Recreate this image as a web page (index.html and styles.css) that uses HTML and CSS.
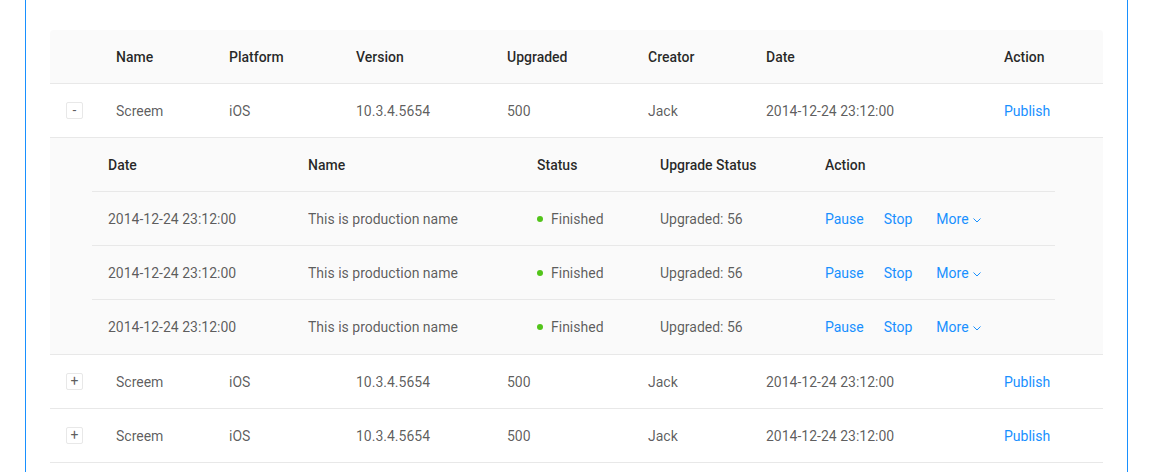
FILE: index.html
```html
<!DOCTYPE html>
<html>
<head>
<meta charset="utf-8">
<link rel="stylesheet" href="styles.css">
</head>
<body>
<div class="frame">
  <table class="main">
    <colgroup>
      <col class="c-exp"><col class="c-name"><col class="c-plat"><col class="c-ver"><col class="c-upg"><col class="c-creator"><col class="c-date"><col class="c-action">
    </colgroup>
    <thead>
      <tr><th></th><th>Name</th><th>Platform</th><th>Version</th><th>Upgraded</th><th>Creator</th><th>Date</th><th>Action</th></tr>
    </thead>
    <tbody>
      <tr>
        <td><span class="exp">-</span></td><td>Screem</td><td>iOS</td><td>10.3.4.5654</td><td>500</td><td>Jack</td><td>2014-12-24 23:12:00</td><td><a class="link">Publish</a></td>
      </tr>
      <tr class="expanded">
        <td colspan="8" class="exp-cell">
          <div class="nested-wrap">
            <table class="nested">
              <colgroup>
                <col class="n-date"><col class="n-name"><col class="n-status"><col class="n-upg"><col class="n-action">
              </colgroup>
              <thead>
                <tr><th>Date</th><th>Name</th><th>Status</th><th>Upgrade Status</th><th>Action</th></tr>
              </thead>
              <tbody>
                <tr><td>2014-12-24 23:12:00</td><td>This is production name</td><td><span class="dot"></span>Finished</td><td>Upgraded: 56</td><td><div class="acts"><a class="link pause">Pause</a><a class="link stop">Stop</a><a class="link more">More <svg class="chev" width="8" height="5" viewBox="0 0 8 5"><polyline points="0.5,0.5 4,4 7.5,0.5" fill="none" stroke="#1890ff" stroke-width="1"/></svg></a></div></td></tr>
                <tr><td>2014-12-24 23:12:00</td><td>This is production name</td><td><span class="dot"></span>Finished</td><td>Upgraded: 56</td><td><div class="acts"><a class="link pause">Pause</a><a class="link stop">Stop</a><a class="link more">More <svg class="chev" width="8" height="5" viewBox="0 0 8 5"><polyline points="0.5,0.5 4,4 7.5,0.5" fill="none" stroke="#1890ff" stroke-width="1"/></svg></a></div></td></tr>
                <tr class="last"><td>2014-12-24 23:12:00</td><td>This is production name</td><td><span class="dot"></span>Finished</td><td>Upgraded: 56</td><td><div class="acts"><a class="link pause">Pause</a><a class="link stop">Stop</a><a class="link more">More <svg class="chev" width="8" height="5" viewBox="0 0 8 5"><polyline points="0.5,0.5 4,4 7.5,0.5" fill="none" stroke="#1890ff" stroke-width="1"/></svg></a></div></td></tr>
              </tbody>
            </table>
          </div>
        </td>
      </tr>
      <tr>
        <td><span class="exp">+</span></td><td>Screem</td><td>iOS</td><td>10.3.4.5654</td><td>500</td><td>Jack</td><td>2014-12-24 23:12:00</td><td><a class="link">Publish</a></td>
      </tr>
      <tr>
        <td><span class="exp">+</span></td><td>Screem</td><td>iOS</td><td>10.3.4.5654</td><td>500</td><td>Jack</td><td>2014-12-24 23:12:00</td><td><a class="link">Publish</a></td>
      </tr>
    </tbody>
  </table>
</div>
</body>
</html>
```

FILE: styles.css
```css
html, body {
  margin: 0;
  padding: 0;
  background: #fff;
}
body {
  font-family: Roboto, "Noto Sans", sans-serif;
  font-size: 14px;
  line-height: 21px;
  color: rgba(0, 0, 0, 0.65);
  height: 472px;
  overflow: hidden;
}
.frame {
  margin-left: 25px;
  width: 1053px;
  padding: 30px 24px 0 24px;
  border-left: 1px solid #1890ff;
  border-right: 1px solid #1890ff;
  min-height: 600px;
}
table {
  border-collapse: separate;
  border-spacing: 0;
  table-layout: fixed;
}
.main {
  width: 1053px;
}
.c-exp { width: 50px; }
.c-name { width: 113px; }
.c-plat { width: 127px; }
.c-ver { width: 151px; }
.c-upg { width: 141px; }
.c-creator { width: 118px; }
.c-date { width: 238px; }
.c-action { width: 115px; }

th, td {
  text-align: left;
  padding: 17px 16px 15px;
  border-bottom: 1px solid #e8e8e8;
  white-space: nowrap;
  vertical-align: middle;
}
th {
  font-weight: 500;
  color: rgba(0, 0, 0, 0.85);
}
.main > thead > tr > th {
  background: #fafafa;
}
.main > thead > tr > th:first-child {
  border-top-left-radius: 4px;
}
.main > thead > tr > th:last-child {
  border-top-right-radius: 4px;
}
.exp {
  display: inline-block;
  box-sizing: border-box;
  width: 17px;
  height: 17px;
  border: 1px solid #e8e8e8;
  border-radius: 2px;
  background: #fff;
  text-align: center;
  line-height: 14px;
  font-size: 14px;
  color: rgba(0, 0, 0, 0.65);
  vertical-align: middle;
  margin-top: -4px;
}
.link {
  color: #1890ff;
  text-decoration: none;
}
.exp-cell {
  padding: 0;
  background: #fafafa;
}
.nested-wrap {
  padding: 0 48px 0 42px;
}
.nested {
  width: 963px;
}
.n-date { width: 200px; }
.n-name { width: 229px; }
.n-status { width: 123px; }
.n-upg { width: 165px; }
.n-action { width: 246px; }
.nested th, .nested td {
  background: transparent;
}
.nested tr.last td {
  border-bottom: 0;
  padding-bottom: 16px;
}
.dot {
  display: inline-block;
  width: 6px;
  height: 6px;
  border-radius: 50%;
  background: #52c41a;
  margin-right: 8px;
  vertical-align: middle;
  position: relative;
  top: -1px;
}
.acts {
  display: flex;
  align-items: center;
}
.pause {
  margin-right: 20px;
}
.stop {
  margin-right: 24px;
}
.more {
  display: inline-flex;
  align-items: center;
  gap: 4px;
}
.chev {
  display: block;
  margin-top: 1px;
}
```
